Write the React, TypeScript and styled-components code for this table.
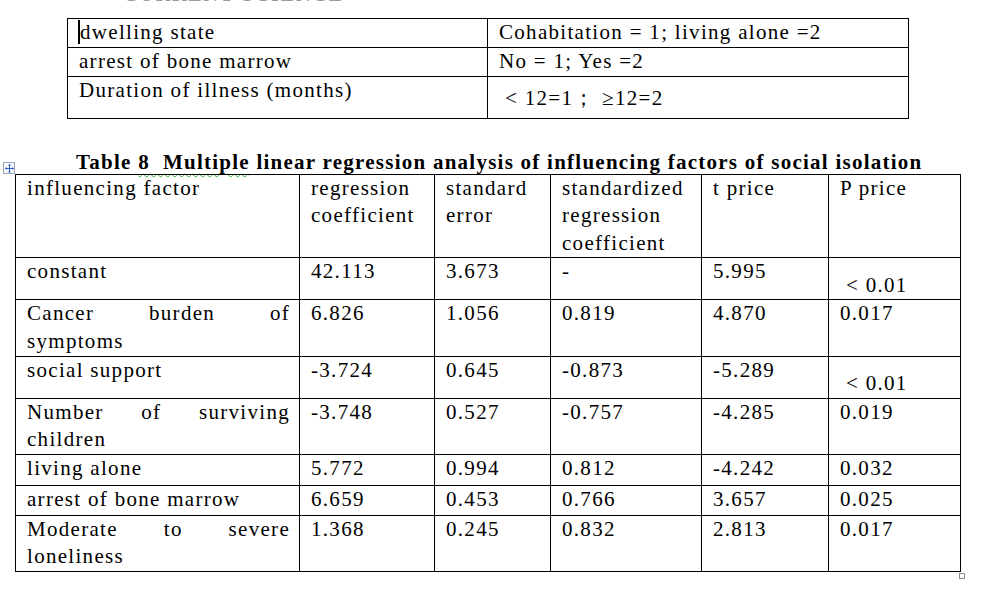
import React from "react";
import styled, { createGlobalStyle } from "styled-components";

const GlobalStyle = createGlobalStyle`
  html, body { margin: 0; padding: 0; background: #ffffff; }
  body { font-family: "Liberation Serif", "Times New Roman", serif; color: #000; }
`;

const Page = styled.div`
  position: relative;
  width: 984px;
  height: 597px;
  overflow: hidden;
  background: #fff;
  display: flex;
  flex-direction: column;
`;

const Masthead = styled.div`
  height: 2px;
  overflow: hidden;
  padding-left: 123px;
`;

const MastText = styled.div`
  font-weight: bold;
  font-size: 20px;
  line-height: 20px;
  margin-top: -16px;
  letter-spacing: 1.9px;
  color: #9a9a9a;
  white-space: nowrap;
`;

const Table = styled.table`
  border-collapse: collapse;
  table-layout: fixed;
  font-size: 21px;
  letter-spacing: 1.3px;
`;

const TopTable = styled(Table)`
  margin: 16px 0 0 67px;
  width: 842px;
`;

const MainTable = styled(Table)`
  margin: 0 0 0 15px;
  width: 945px;
`;

const Row = styled.tr<{ $h?: number }>`
  height: ${(p) => (p.$h ? `${p.$h}px` : "auto")};
`;

const Cell = styled.td<{ $w?: number; $pt?: number; $justify?: boolean }>`
  box-sizing: border-box;
  border: 1px solid #000;
  ${(p) => (p.$w ? `width: ${p.$w}px;` : "")}
  padding: ${(p) => p.$pt ?? 0}px 9px 0 11px;
  vertical-align: top;
  line-height: 27.6px;
  text-align: ${(p) => (p.$justify ? "justify" : "left")};
  white-space: normal;
`;

const Caret = styled.span`
  border-left: 2px solid #000;
  margin-left: -1px;
`;

const Title = styled.div`
  font-weight: bold;
  font-size: 21px;
  line-height: 24px;
  letter-spacing: 1.25px;
  margin: 31px 0 0 76px;
  white-space: nowrap;
`;

const Marked = styled.span`
  text-decoration: underline wavy #3aa83a;
  text-decoration-thickness: 1px;
  text-underline-offset: 4px;
`;

const Underlined = styled.span`
  border-bottom: 1.5px solid #000;
`;

const MoveHandle = styled.div`
  position: absolute;
  left: 3px;
  top: 162px;
  width: 10px;
  height: 10px;
  border: 1px solid #9aa6b8;
  background: #f4f7fb;
  display: flex;
  align-items: center;
  justify-content: center;
`;

const ResizeHandle = styled.div`
  position: absolute;
  left: 959px;
  top: 573px;
  width: 4px;
  height: 4px;
  border: 1px solid #8c8c8c;
  background: #fff;
`;

const Lt = styled.span`
  padding-left: 6px;
`;

type R = { f: string; b: string; se: string; sb: string; t: string; p: string; low?: boolean; h?: number };

const rows: R[] = [
  { f: "constant", b: "42.113", se: "3.673", sb: "-", t: "5.995", p: "< 0.01", low: true },
  { f: "Cancer burden of symptoms", b: "6.826", se: "1.056", sb: "0.819", t: "4.870", p: "0.017" },
  { f: "social support", b: "-3.724", se: "0.645", sb: "-0.873", t: "-5.289", p: "< 0.01", low: true },
  { f: "Number of surviving children", b: "-3.748", se: "0.527", sb: "-0.757", t: "-4.285", p: "0.019" },
  { f: "living alone", b: "5.772", se: "0.994", sb: "0.812", t: "-4.242", p: "0.032", h: 31 },
  { f: "arrest of bone marrow", b: "6.659", se: "0.453", sb: "0.766", t: "3.657", p: "0.025", h: 30 },
  { f: "Moderate to severe loneliness", b: "1.368", se: "0.245", sb: "0.832", t: "2.813", p: "0.017" },
];

export default function App() {
  return (
    <Page>
      <GlobalStyle />
      <Masthead>
        <MastText>CURRENT SCIENCE</MastText>
      </Masthead>
      <TopTable>
        <tbody>
          <Row $h={29}>
            <Cell $w={420}>
              <Caret />dwelling state
            </Cell>
            <Cell>Cohabitation = 1; living alone =2</Cell>
          </Row>
          <Row $h={28}>
            <Cell>arrest of bone marrow</Cell>
            <Cell>No = 1; Yes =2</Cell>
          </Row>
          <Row $h={42}>
            <Cell>Duration of illness (months)</Cell>
            <Cell $pt={8}>
              <Lt>&lt; 12=1；&nbsp;≥12=2</Lt>
            </Cell>
          </Row>
        </tbody>
      </TopTable>
      <Title>
        Table <Marked><Underlined>8&nbsp; Multiple</Underlined></Marked> linear regression analysis of influencing factors of social isolation
      </Title>
      <MainTable>
        <tbody>
          <Row>
            <Cell $w={284}>influencing factor</Cell>
            <Cell $w={135}>regression coefficient</Cell>
            <Cell $w={116}>standard error</Cell>
            <Cell $w={151}>standardized regression coefficient</Cell>
            <Cell $w={127}>t price</Cell>
            <Cell $w={132}>P price</Cell>
          </Row>
          {rows.map((r) => (
            <Row key={r.f} $h={r.h}>
              <Cell $justify>{r.f}</Cell>
              <Cell>{r.b}</Cell>
              <Cell>{r.se}</Cell>
              <Cell>{r.sb}</Cell>
              <Cell>{r.t}</Cell>
              <Cell $pt={r.low ? 13.4 : 0}>{r.low ? <Lt>{r.p}</Lt> : r.p}</Cell>
            </Row>
          ))}
        </tbody>
      </MainTable>
      <MoveHandle>
        <svg width="9" height="9" viewBox="0 0 9 9">
          <path d="M4.5 0.5v8M0.5 4.5h8" stroke="#2a62c9" strokeWidth="1" />
          <path d="M4.5 0L3 1.6h3zM4.5 9L3 7.4h3zM0 4.5L1.6 3v3zM9 4.5L7.4 3v3z" fill="#2a62c9" />
        </svg>
      </MoveHandle>
      <ResizeHandle />
    </Page>
  );
}
